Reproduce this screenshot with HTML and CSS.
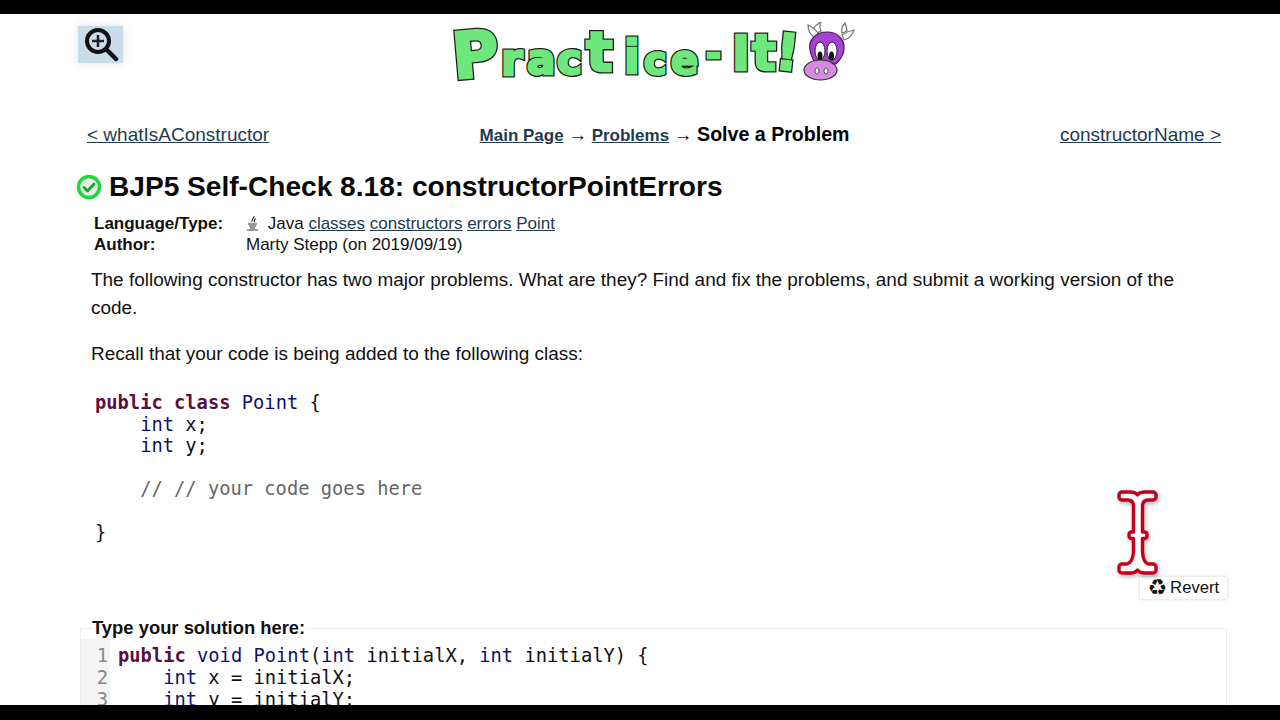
FILE: index.html
```html
<!DOCTYPE html>
<html lang="en">

<head>
    <meta charset="UTF-8" />
    <title>Practice-It: constructorPointErrors</title>
    <link rel="stylesheet" href="styles.css">
</head>

<body>
    <div class="page">
        <a class="zoom" href="#">
            <svg width="36" height="36" viewBox="0 0 36 36">
                <circle cx="15" cy="14" r="11" fill="none" stroke="#111" stroke-width="4" />
                <path d="M23 22l10 10" stroke="#111" stroke-width="4.5" stroke-linecap="round" />
                <path d="M15 8v12M9 14h12" stroke="#222" stroke-width="2.6" />
            </svg>
        </a>

        <header class="logo">
            <span class="l l-p" data-c="P">P</span><span class="l l-r" data-c="r">r</span><span class="l l-a" data-c="a">a</span><span class="l l-c" data-c="c">c</span><span class="l l-t" data-c="t">t</span><span class="l l-i" data-c="i">i</span><span class="l l-c2" data-c="c">c</span><span class="l l-e" data-c="e">e</span><span class="l l-dash" data-c="-">-</span><span class="l l-ii" data-c="I">I</span><span class="l l-t2" data-c="t">t</span><span class="l l-ex" data-c="!">!</span>
            <svg class="cow" width="54" height="62" viewBox="0 0 54 62">
                <path d="M13 12C10 9 11 4 19 0c-2 4-1 7 0 9z" fill="#fff" stroke="#777" stroke-width="1.2" />
                <path d="M40 11c-1-4 0-7 3-10 1 3 2 5 2 8z" fill="#fff" stroke="#777" stroke-width="1.2" />
                <path d="M13 15C8 13 6 8 6 3c4 2 8 5 10 8z" fill="#fff" stroke="#777" stroke-width="1.2" />
                <path d="M42 18c5-1 8-5 10-10-5 1-9 3-12 5z" fill="#fff" stroke="#777" stroke-width="1.2" />
                <path d="M8 28C6 18 14 10 25 10s18 8 17 18c-1 6-4 10-8 14H14c-3-4-5-8-6-14z" fill="#a83fd6" stroke="#43204f" stroke-width="1.2" />
                <ellipse cx="18" cy="29" rx="5" ry="9" fill="#fff" stroke="#222" />
                <ellipse cx="30" cy="29" rx="5" ry="9" fill="#fff" stroke="#222" />
                <ellipse cx="18" cy="34" rx="2.5" ry="4.5" fill="#111" />
                <ellipse cx="29.5" cy="34" rx="2.5" ry="4.5" fill="#111" />
                <ellipse cx="18.5" cy="48" rx="16.5" ry="10" fill="#d48be0" stroke="#333" stroke-width="1.2" />
                <ellipse cx="15" cy="49" rx="2" ry="3" fill="#fff" stroke="#333" stroke-width=".8" />
                <ellipse cx="24" cy="49" rx="2" ry="3" fill="#fff" stroke="#333" stroke-width=".8" />
            </svg>
        </header>

        <nav class="crumbs">
            <a href="#">&lt; whatIsAConstructor</a>
            <div class="crumb-mid">
                <a href="#">Main Page</a> <span class="arrow">→</span> <a href="#">Problems</a> <span class="arrow">→</span> <span class="here">Solve a Problem</span>
            </div>
            <a href="#">constructorName &gt;</a>
        </nav>

        <h1 class="title">
            <svg class="check" width="26" height="26" viewBox="0 0 26 26">
                <circle cx="13" cy="13" r="10.5" fill="#e6eee6" stroke="#22d63e" stroke-width="3.6" />
                <path d="M8 13.5l3.5 3.5 6.5-7" fill="none" stroke="#14a82c" stroke-width="2.8" stroke-linecap="round" stroke-linejoin="round" />
            </svg>
            BJP5 Self-Check 8.18: constructorPointErrors
        </h1>

        <div class="meta">
            <b>Language/Type:</b>
            <div class="tags">
                <svg class="java" width="14" height="16" viewBox="0 0 14 16">
                    <path d="M8 1C9 3 5 4 6 7M9.5 3.5C8 5 8 6 9 7" fill="none" stroke="#333" stroke-width="1.2" />
                    <path d="M2 9h9M3 11h7M4 13h5M1 15h11" stroke="#333" stroke-width="1" />
                </svg>
                <span>Java</span>
                <a href="#">classes</a> <a href="#">constructors</a> <a href="#">errors</a> <a href="#">Point</a>
            </div>
            <b>Author:</b>
            <div>Marty Stepp (on 2019/09/19)</div>
        </div>

        <p class="desc">The following constructor has two major problems. What are they? Find and fix the problems, and submit a working version of the code.</p>
        <p class="desc recall">Recall that your code is being added to the following class:</p>

<pre class="code"><b>public</b> <b>class</b> <i>Point</i> {
    <i>int</i> x;
    <i>int</i> y;

    <em>// // your code goes here</em>

}</pre>

        <div class="revert-row">
            <button class="revert"><span class="recycle">♻</span> Revert</button>
        </div>

        <fieldset class="solution">
            <legend>Type your solution here:</legend>
            <div class="editor">
                <div class="gutter">1<br>2<br>3</div>
<pre class="lines"><b>public</b> <i>void</i> <i>Point</i>(<i>int</i> initialX, <i>int</i> initialY) {
    <i>int</i> x = initialX;
    <i>int</i> y = initialY;</pre>
            </div>
        </fieldset>

        <svg class="ibeam" width="46" height="90" viewBox="0 0 46 90">
            <path d="M8 4h8c3 0 6 1 7.5 3 1.5-2 4.5-3 7.5-3h8a3 3 0 0 1 3 3v2a3 3 0 0 1-3 3h-5c-3 0-5 2-5.5 5V44h2a2.5 2.5 0 0 1 2.5 2.5V48a2.5 2.5 0 0 1-2.5 2.5h-2V64c.5 8 2.5 11 5.5 12h5a3 3 0 0 1 3 3v3a3 3 0 0 1-3 3h-8c-3 0-6-1-7.5-3-1.5 2-4.5 3-7.5 3H8a3 3 0 0 1-3-3v-3a3 3 0 0 1 3-3h5c3-1 6-4 6.5-12V50.5h-2A2.5 2.5 0 0 1 15 48v-1.5a2.5 2.5 0 0 1 2.5-2.5h2V17c-.5-3-2.5-5-5.5-5H8a3 3 0 0 1-3-3V7a3 3 0 0 1 3-3z" fill="#fff" stroke="#c4001a" stroke-width="3.4" stroke-linejoin="round" />
        </svg>
    </div>
</body>

</html>
```

FILE: styles.css
```css
* {
margin: 0;
padding: 0;
box-sizing: border-box;
}

body {
background: #000;
height: 720px;
overflow: hidden;
padding-top: 14px;
font-family: "Liberation Sans", Arial, sans-serif;
color: #111;
}

a {
color: #1f3a4d;
text-decoration: underline;
}

.page {
position: relative;
height: 691px;
background: #fff;
overflow: hidden;
padding: 0 53px 0 78px;
}

.zoom {
position: absolute;
left: 78px;
top: 12px;
width: 45px;
height: 37px;
display: flex;
align-items: center;
justify-content: center;
background: #c9dde9;
box-shadow: 0 0 9px rgba(0, 0, 0, .12);
}

.logo {
height: 88px;
padding: 10px 0 0 374px;
display: flex;
align-items: flex-start;
}

.l {
position: relative;
display: block;
font-family: "DejaVu Sans", sans-serif;
font-weight: 700;
color: #1d1d1d;
-webkit-text-stroke: 5px #1d1d1d;
line-height: 60px;
height: 60px;
}

.l::after {
content: attr(data-c);
position: absolute;
left: 0;
top: 0;
color: #6ee87c;
-webkit-text-stroke: 2.4px #6ee87c;
}

.l-p { font-size: 64px; width: 49px; transform: translateY(1px) rotate(-5deg); }
.l-r { font-size: 44px; width: 26px; transform: translateY(6px); }
.l-a { font-size: 42px; width: 30px; transform: translateY(6px); }
.l-c { font-size: 42px; width: 29px; transform: translateY(6px); }
.l-t { font-size: 56px; width: 38px; transform: translateY(-2px); }
.l-i { font-size: 46px; width: 20px; transform: translateY(3px); }
.l-c2 { font-size: 38px; width: 27px; transform: translateY(7px); }
.l-e { font-size: 40px; width: 35px; transform: translateY(6px); }
.l-dash { font-size: 36px; width: 26px; transform: translateY(0); }
.l-ii { font-size: 48px; width: 20px; transform: translateY(-1px); }
.l-t2 { font-size: 50px; width: 24px; transform: translateY(-1px); }
.l-ex { font-size: 50px; width: 26px; transform: translateY(-1px) rotate(6deg); }

.cow {
margin-top: -2px;
}

.crumbs {
display: flex;
justify-content: space-between;
align-items: center;
padding: 0 6px 0 9px;
height: 26px;
margin-top: 20px;
font-size: 19px;
}

.crumb-mid {
font-size: 17px;
font-weight: 700;
margin-bottom: 2px;
}

.crumb-mid .arrow {
font-weight: 400;
font-size: 18.5px;
}

.crumb-mid .here {
font-size: 19.6px;
color: #000;
}

.title {
display: flex;
align-items: center;
gap: 7px;
margin-top: 23px;
margin-left: -1px;
font-size: 28.1px;
line-height: 32px;
color: #0a0a0a;
}

.check {
margin-left: -1px;
}

.meta {
display: grid;
grid-template-columns: 152px auto;
justify-content: start;
margin: 10px 0 0 16px;
font-size: 17px;
line-height: 21px;
}

.meta .java {
vertical-align: -2px;
margin-right: 3px;
}

.desc {
max-width: 1100px;
margin: 11px 0 0 13px;
font-size: 18.97px;
line-height: 28px;
}

.desc.recall {
margin-top: 18px;
}

.code,
.lines {
font-family: "DejaVu Sans Mono", monospace;
font-size: 18.75px;
line-height: 21.6px;
color: #111;
}

.code {
margin: 24px 0 0 17px;
}

.code b,
.lines b {
color: #5b0f3f;
}

.code i,
.lines i {
font-style: normal;
color: #10106e;
}

.code em {
font-style: normal;
color: #666;
}

.revert-row {
display: flex;
justify-content: flex-end;
margin-top: 34px;
}

.revert {
height: 22px;
width: 87px;
border: 0;
background: #fff;
box-shadow: 0 0 3px rgba(0, 0, 0, .2);
font-family: "Liberation Sans", sans-serif;
font-size: 16.7px;
color: #111;
white-space: nowrap;
}

.recycle {
font-family: "DejaVu Sans", sans-serif;
font-size: 22px;
line-height: 16px;
vertical-align: -2px;
margin-right: -2px;
}

.solution {
margin: 18px 0 0 2px;
border: 1px solid #eee;
border-bottom: 0;
padding: 0;
height: 120px;
}

.solution legend {
margin-left: 11px;
font-size: 18.4px;
font-weight: 700;
}

.editor {
display: flex;
}

.gutter {
width: 29px;
padding: 6px 2px 0 0;
background: #f5f5f5;
text-align: right;
font-family: "DejaVu Sans Mono", monospace;
font-size: 18.75px;
line-height: 22px;
color: #888;
}

.lines {
padding: 6px 0 0 8px;
line-height: 22px;
}

.ibeam {
position: absolute;
left: 1114px;
top: 474px;
filter: drop-shadow(1px 2px 2px rgba(0, 0, 0, .3));
}
```
